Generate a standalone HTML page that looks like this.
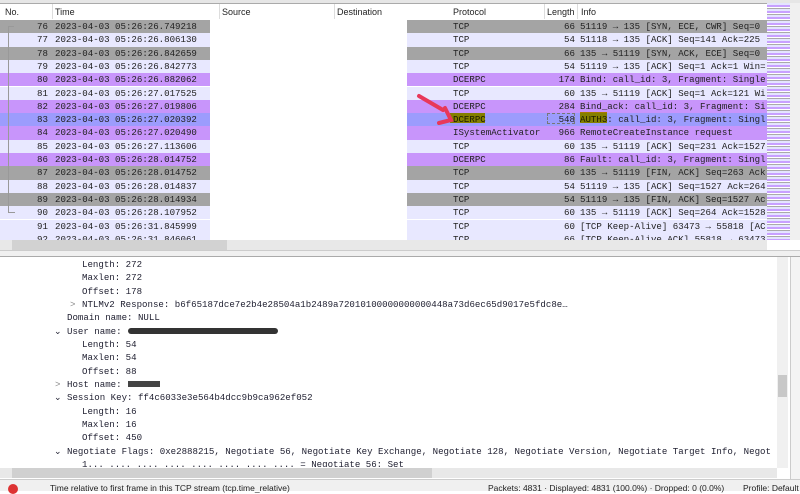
<!DOCTYPE html>
<html><head><style>
*{margin:0;padding:0;box-sizing:border-box}
body{width:800px;height:491px;overflow:hidden;background:#fff;position:relative;font-family:"Liberation Mono",monospace;font-size:9.1px;color:#222}
.a{position:absolute;white-space:pre}
.hd{font-family:"Liberation Sans",sans-serif;font-size:9px;color:#222}
.r{position:absolute;left:0;width:767px;height:13.3px;line-height:13.3px}
.r .b1{position:absolute;left:0;width:210px;height:100%}
.r .b2{position:absolute;left:407px;width:360px;height:100%}
.r span{position:absolute;white-space:pre;top:0}
.d{position:absolute;white-space:pre;line-height:13.3px;color:#223}
</style></head><body>
<div class="a" style="left:0;top:0;width:800px;height:3px;background:#e6e6e6"></div>
<div class="a" style="left:0;top:3px;width:800px;height:1px;background:#aaa"></div>
<div class="a hd" style="left:5px;top:7px">No.</div>
<div class="a hd" style="left:55px;top:7px">Time</div>
<div class="a hd" style="left:222px;top:7px">Source</div>
<div class="a hd" style="left:337px;top:7px">Destination</div>
<div class="a hd" style="left:453px;top:7px">Protocol</div>
<div class="a hd" style="left:547px;top:7px">Length</div>
<div class="a hd" style="left:581px;top:7px">Info</div>
<div class="a" style="left:52px;top:4px;width:1px;height:15px;background:#ddd"></div>
<div class="a" style="left:219px;top:4px;width:1px;height:15px;background:#ddd"></div>
<div class="a" style="left:334px;top:4px;width:1px;height:15px;background:#ddd"></div>
<div class="a" style="left:544px;top:4px;width:1px;height:15px;background:#ddd"></div>
<div class="a" style="left:577px;top:4px;width:1px;height:15px;background:#ddd"></div>

<div id="rows"></div>
<script>
var R=[
[76,"26.749218","TCP",66,"51119 → 135 [SYN, ECE, CWR] Seq=0 ","g"],
[77,"26.806130","TCP",54,"51118 → 135 [ACK] Seq=141 Ack=225 ","l"],
[78,"26.842659","TCP",66,"135 → 51119 [SYN, ACK, ECE] Seq=0 ","g"],
[79,"26.842773","TCP",54,"51119 → 135 [ACK] Seq=1 Ack=1 Win=","l"],
[80,"26.882062","DCERPC",174,"Bind: call_id: 3, Fragment: Single","p"],
[81,"27.017525","TCP",60,"135 → 51119 [ACK] Seq=1 Ack=121 Wi","l"],
[82,"27.019806","DCERPC",284,"Bind_ack: call_id: 3, Fragment: Si","p"],
[83,"27.020392","DCERPC",548,"AUTH3: call_id: 3, Fragment: Singl","s"],
[84,"27.020490","ISystemActivator",966,"RemoteCreateInstance request","p"],
[85,"27.113606","TCP",60,"135 → 51119 [ACK] Seq=231 Ack=1527","l"],
[86,"28.014752","DCERPC",86,"Fault: call_id: 3, Fragment: Singl","p"],
[87,"28.014752","TCP",60,"135 → 51119 [FIN, ACK] Seq=263 Ack","g"],
[88,"28.014837","TCP",54,"51119 → 135 [ACK] Seq=1527 Ack=264","l"],
[89,"28.014934","TCP",54,"51119 → 135 [FIN, ACK] Seq=1527 Ac","g"],
[90,"28.107952","TCP",60,"135 → 51119 [ACK] Seq=264 Ack=1528","l"],
[91,"31.845999","TCP",60,"[TCP Keep-Alive] 63473 → 55818 [AC","l"],
[92,"31.846061","TCP",66,"[TCP Keep-Alive ACK] 55818 → 63473","l"]];
var C={g:"#a4a4a4",l:"#e8e8ff",p:"#c895fb",s:"#9c9cfd"};
var h="";
R.forEach(function(x,i){
 var t=20+i*13.3,c=C[x[5]];
 h+='<div class="r" style="top:'+t+'px"><div class="b1" style="background:'+c+'"></div><div class="b2" style="background:'+c+'"></div>'+
 '<span style="left:37px">'+x[0]+'</span><span style="left:55px">2023-04-03 05:26:'+x[1]+'</span>'+
 '<span style="left:453px">'+x[2]+'</span><span style="left:'+(575-String(x[3]).length*5.47)+'px">'+x[3]+'</span>'+
 '<span style="left:580px">'+x[4]+'</span></div>';
});
document.getElementById("rows").innerHTML=h;
</script>
<div class="a" style="left:450px;top:113px;width:35px;height:10px;background:#d8d000;mix-blend-mode:multiply"></div>
<div class="a" style="left:580px;top:112px;width:27px;height:11px;background:#d8d000;mix-blend-mode:multiply"></div>
<div class="a" style="left:547px;top:113px;width:28px;height:11px;border:1px dashed #777"></div>
<svg class="a" style="left:415px;top:92px" width="40" height="35"><path d="M4 4 L28 18 M30 16 L36 28 L24 31" stroke="#e8385a" stroke-width="4" fill="none" stroke-linecap="round"/></svg>
<div class="a" style="left:8px;top:26px;width:1px;height:186px;background:#999"></div>
<div class="a" style="left:8px;top:212px;width:7px;height:1px;background:#999"></div>
<div class="a" style="left:8px;top:26px;width:6px;height:1px;background:#999"></div>

<div class="a" style="left:767px;top:3px;width:23px;height:237px;background:repeating-linear-gradient(#e4e4ff 0 2px,#c8a0ff 2px 4px,#fff 4px 5px,#aaa 5px 6px)"></div>
<div class="a" style="left:790px;top:3px;width:10px;height:237px;background:#f0f0f0"></div>
<div class="a" style="left:0;top:240px;width:767px;height:10px;background:#e8e8e8"></div>
<div class="a" style="left:12px;top:240px;width:215px;height:10px;background:#d2d2d2"></div>
<div class="a" style="left:0;top:250px;width:800px;height:7px;background:#f0f0f0;border-top:1px solid #ccc;border-bottom:1px solid #aaa"></div>

<div class="d" style="left:82px;top:258px">Length: 272</div>
<div class="d" style="left:82px;top:271px">Maxlen: 272</div>
<div class="d" style="left:82px;top:285px">Offset: 178</div>
<div class="d" style="left:70px;top:298px;color:#888">&gt;</div>
<div class="d" style="left:82px;top:298px">NTLMv2 Response: b6f65187dce7e2b4e28504a1b2489a72010100000000000448a73d6ec65d9017e5fdc8e…</div>
<div class="d" style="left:67px;top:311px">Domain name: NULL</div>
<div class="d" style="left:54px;top:325px">⌄</div>
<div class="d" style="left:67px;top:325px">User name: </div>
<div class="a" style="left:128px;top:328px;width:150px;height:6px;background:#333;border-radius:3px"></div>
<div class="d" style="left:82px;top:338px">Length: 54</div>
<div class="d" style="left:82px;top:351px">Maxlen: 54</div>
<div class="d" style="left:82px;top:365px">Offset: 88</div>
<div class="d" style="left:55px;top:378px;color:#888">&gt;</div>
<div class="d" style="left:67px;top:378px">Host name: </div>
<div class="a" style="left:128px;top:381px;width:32px;height:6px;background:#444"></div>
<div class="d" style="left:54px;top:391px">⌄</div>
<div class="d" style="left:67px;top:391px">Session Key: ff4c6033e3e564b4dcc9b9ca962ef052</div>
<div class="d" style="left:82px;top:405px">Length: 16</div>
<div class="d" style="left:82px;top:418px">Maxlen: 16</div>
<div class="d" style="left:82px;top:431px">Offset: 450</div>
<div class="d" style="left:54px;top:445px">⌄</div>
<div class="d" style="left:67px;top:445px">Negotiate Flags: 0xe2888215, Negotiate 56, Negotiate Key Exchange, Negotiate 128, Negotiate Version, Negotiate Target Info, Negot</div>
<div class="d" style="left:82px;top:458px;height:9px;overflow:hidden">1... .... .... .... .... .... .... .... = Negotiate 56: Set</div>
<div class="a" style="left:777px;top:257px;width:11px;height:211px;background:#f0f0f0"></div>
<div class="a" style="left:778px;top:375px;width:9px;height:22px;background:#c8c8c8"></div>
<div class="a" style="left:790px;top:257px;width:10px;height:223px;background:#f4f4f4;border-left:1px solid #ccc"></div>
<div class="a" style="left:0;top:468px;width:777px;height:10px;background:#e8e8e8"></div>
<div class="a" style="left:12px;top:468px;width:420px;height:10px;background:#d0d0d0"></div>
<div class="a" style="left:0;top:479px;width:800px;height:12px;background:#f0f0f0;border-top:1px solid #ccc"></div>
<div class="a" style="left:8px;top:484px;width:10px;height:10px;border-radius:5px;background:#d33"></div>
<div class="a hd" style="left:50px;top:483px;font-size:8.5px">Time relative to first frame in this TCP stream (tcp.time_relative)</div>
<div class="a hd" style="left:488px;top:483px;font-size:8.5px">Packets: 4831 · Displayed: 4831 (100.0%) · Dropped: 0 (0.0%)</div>
<div class="a hd" style="left:743px;top:483px;font-size:8.5px">Profile: Default</div>
</body></html>
